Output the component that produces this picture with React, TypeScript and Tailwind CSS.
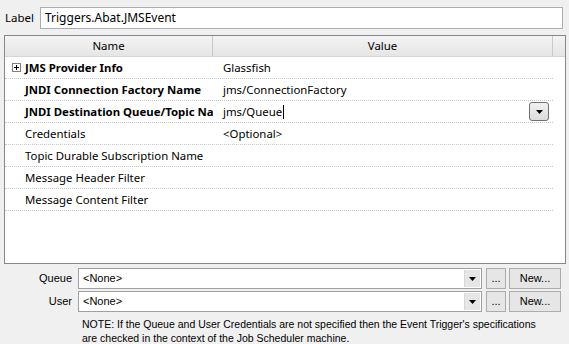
import React from "react";

type Row = { name: string; value?: string; bold?: boolean; expand?: boolean; edit?: boolean };

const rows: Row[] = [
  { name: "JMS Provider Info", value: "Glassfish", bold: true, expand: true },
  { name: "JNDI Connection Factory Name", value: "jms/ConnectionFactory", bold: true },
  { name: "JNDI Destination Queue/Topic Name", value: "jms/Queue", bold: true, edit: true },
  { name: "Credentials", value: "<Optional>" },
  { name: "Topic Durable Subscription Name" },
  { name: "Message Header Filter" },
  { name: "Message Content Filter" },
];

function Arrow() {
  return (
    <svg width="7" height="4" viewBox="0 0 7 4">
      <path d="M0 0h7L3.5 4z" fill="#000" />
    </svg>
  );
}

function Combo({ label }: { label: string }) {
  return (
    <div className="flex items-center h-[21px]">
      <div className="w-[78px] pr-[6px] text-right">{label}</div>
      <div className="flex h-[21px] w-[404px] items-center border border-[#a0a0a0] bg-white pl-[4px]">
        <span className="flex-1">&lt;None&gt;</span>
        <div className="mr-[1px] flex h-[17px] w-[16px] items-center justify-center bg-[#e6e6e6] border-l border-[#d8d8d8]">
          <Arrow />
        </div>
      </div>
      <button className="ml-[4px] h-[21px] w-[20px] border border-[#acacac] bg-[#e6e6e6] text-[11px] leading-none">...</button>
      <button className="ml-[3px] h-[21px] w-[52px] border border-[#acacac] bg-[#e6e6e6]">New...</button>
    </div>
  );
}

export default function App() {
  return (
    <div
      className="h-[344px] w-[569px] overflow-hidden bg-[#f0f0f0] text-[12px] text-black"
      style={{ fontFamily: '"Noto Sans", "Open Sans", sans-serif' }}
    >
      <div className="flex items-center pl-[5px] pr-[6px] pt-[7px]">
        <span className="w-[35px] text-[11.5px]">Label</span>
        <div className="flex h-[22px] flex-1 items-center border border-[#abadb3] bg-white pl-[4px]">
          Triggers.Abat.JMSEvent
        </div>
      </div>

      <div className="mx-[4px] mt-[6px] flex h-[229px] w-[562px] flex-col border border-[#828790] bg-white text-[11.4px]">
        <div className="flex h-[21px] border-b border-[#d5d5d5] bg-gradient-to-b from-[#f4f4f4] to-[#e5e5e5]">
          <div className="flex w-[208px] items-center justify-center border-r border-[#c8c8c8]">Name</div>
          <div className="flex w-[340px] items-center justify-center border-r border-[#c8c8c8]">Value</div>
          <div className="flex-1" />
        </div>
        <div className="flex-1 pr-[12px]">
          {rows.map((r) => (
            <div key={r.name} className="flex h-[22px] border-b border-dotted border-[#c8c8c8]">
              <div className="flex w-[208px] shrink-0 items-center overflow-hidden whitespace-nowrap">
                <div className="flex w-[20px] shrink-0 justify-center pl-[2px]">
                  {r.expand && (
                    <div className="relative flex h-[9px] w-[9px] items-center justify-center border border-[#808080] bg-white">
                      <div className="h-[1px] w-[5px] bg-black" />
                      <div className="absolute h-[5px] w-[1px] bg-black" />
                    </div>
                  )}
                </div>
                <span className={r.bold ? "font-bold" : ""}>{r.name}</span>
              </div>
              <div className="flex flex-1 items-center bg-white pl-[10px]">
                <span>{r.value}</span>
                {r.edit && <span className="ml-[1px] h-[14px] w-[1px] bg-black" />}
                {r.edit && <div className="flex-1" />}
                {r.edit && (
                  <div className="mr-[4px] flex h-[19px] w-[20px] items-center justify-center rounded-[3px] border border-[#707070] bg-gradient-to-b from-[#f2f2f2] to-[#dcdcdc]">
                    <Arrow />
                  </div>
                )}
              </div>
            </div>
          ))}
        </div>
      </div>

      <div
        className="mt-[4px] flex flex-col gap-[2px] text-[11px]"
        style={{ fontFamily: '"Liberation Sans", Arial, sans-serif' }}
      >
        <Combo label="Queue" />
        <Combo label="User" />
        <div className="mt-[3px] whitespace-nowrap pl-[82px] text-[10.5px] leading-[14px]">
          NOTE: If the Queue and User Credentials are not specified then the Event Trigger's specifications
          <br />
          are checked in the context of the Job Scheduler machine.
        </div>
      </div>
    </div>
  );
}
